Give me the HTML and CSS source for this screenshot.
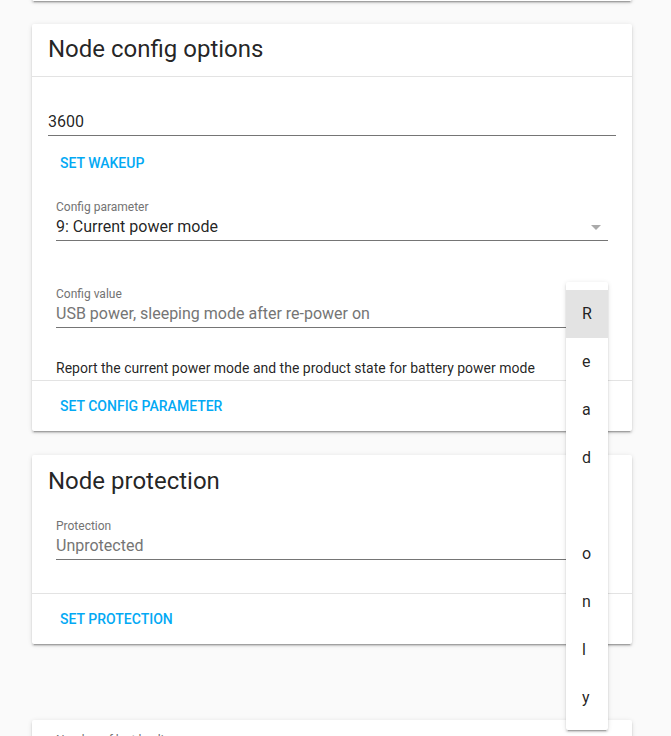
FILE: index.html
```html
<!DOCTYPE html>
<html>
<head>
<meta charset="utf-8">
<link rel="stylesheet" href="styles.css">
</head>
<body>
<div class="page">
  <div class="card stub"></div>

  <div class="card config">
    <div class="card-header ruled">Node config options</div>
    <div class="card-content">
      <div class="field wake">
        <div class="value">3600</div>
      </div>
      <button class="btn wake-btn">Set wakeup</button>
      <div class="field select">
        <div class="label">Config parameter</div>
        <div class="value">9: Current power mode</div>
        <svg class="arrow" viewBox="0 0 24 24" width="24" height="24"><path d="M7 10l5 5 5-5z"/></svg>
      </div>
      <div class="field cfg-value">
        <div class="label">Config value</div>
        <div class="value muted">USB power, sleeping mode after re-power on</div>
      </div>
      <div class="help">Report the current power mode and the product state for battery power mode</div>
    </div>
    <div class="card-actions">
      <button class="btn">Set config parameter</button>
    </div>
  </div>

  <div class="card protection">
    <div class="card-header">Node protection</div>
    <div class="card-content">
      <div class="field select">
        <div class="label">Protection</div>
        <div class="value muted">Unprotected</div>
      </div>
    </div>
    <div class="card-actions">
      <button class="btn">Set protection</button>
    </div>
  </div>

  <div class="card log">
    <div class="card-content">
      <div class="field select">
        <div class="label">Number of last log lines.</div>
        <div class="value">&nbsp;</div>
      </div>
    </div>
  </div>
</div>

<div class="menu">
  <div class="item selected">R</div>
  <div class="item">e</div>
  <div class="item">a</div>
  <div class="item">d</div>
  <div class="item"> </div>
  <div class="item">o</div>
  <div class="item">n</div>
  <div class="item">l</div>
  <div class="item">y</div>
</div>
</body>
</html>
```

FILE: styles.css
```css
html, body {
  margin: 0;
  height: 736px;
  overflow: hidden;
}
body {
  background: #fafafa;
  font-family: Roboto, "Liberation Sans", sans-serif;
  color: rgba(0, 0, 0, 0.87);
  position: relative;
}
.page {
  width: 600px;
  margin-left: 32px;
  display: flex;
  flex-direction: column;
}
.card {
  background: #fff;
  border-radius: 2px;
  box-shadow: 0 2px 2px 0 rgba(0,0,0,0.14), 0 1px 5px 0 rgba(0,0,0,0.12), 0 3px 1px -2px rgba(0,0,0,0.2);
}
.stub {
  height: 24px;
  margin-top: -23px;
}
.config { margin-top: 23px; }
.protection { margin-top: 24px; }
.log { margin-top: 76px; height: 200px; flex-shrink: 0; }

.card-header {
  font-size: 24px;
  line-height: 32px;
  padding: 10px 16px 0;
}
.card-header.ruled {
  padding: 9px 16px 11px;
  border-bottom: 1px solid #e3e3e3;
}
.card-content {
  padding: 0 16px;
}
.field {
  position: relative;
  border-bottom: 1px solid #757575;
  padding-bottom: 1px;
}
.field .label {
  font-size: 12px;
  line-height: 16px;
  color: #737373;
}
.field .value {
  font-size: 16px;
  line-height: 24px;
}
.value.muted {
  color: #757575;
}
.wake { margin-top: 33px; }
.select { margin: 18px 8px 0; }
.cfg-value { margin: 45px 8px 0; }
.arrow {
  position: absolute;
  right: 0;
  bottom: 1px;
  fill: #aaa;
}
.help {
  font-size: 14px;
  line-height: 20px;
  margin: 30px 8px 2px;
}
.protection .card-content { padding: 3px 16px 33px; }
.log .card-content { padding-top: 0; }
.log .select { margin-top: 12px; border-bottom-color: transparent; }

.btn {
  display: block;
  background: none;
  border: 0;
  font-family: Roboto, "Liberation Sans", sans-serif;
  font-size: 14px;
  font-weight: 500;
  text-transform: uppercase;
  color: #03a9f4;
  height: 36px;
  line-height: 36px;
  padding: 0 8px;
  margin: 0 4px;
  text-align: left;
}
.wake-btn { margin-top: 9px; }
.card-actions {
  border-top: 1px solid #e3e3e3;
  padding: 7px 16px;
  display: flex;
}

.menu {
  position: absolute;
  left: 566px;
  top: 282px;
  width: 42px;
  padding: 8px 0;
  background: #fff;
  border-radius: 2px;
  box-shadow: 0 2px 2px 0 rgba(0,0,0,0.14), 0 1px 5px 0 rgba(0,0,0,0.12), 0 3px 1px -2px rgba(0,0,0,0.2);
}
.item {
  height: 48px;
  line-height: 48px;
  padding-left: 16px;
  font-size: 16px;
  white-space: pre;
}
.item.selected {
  background: #e3e3e3;
}
```
